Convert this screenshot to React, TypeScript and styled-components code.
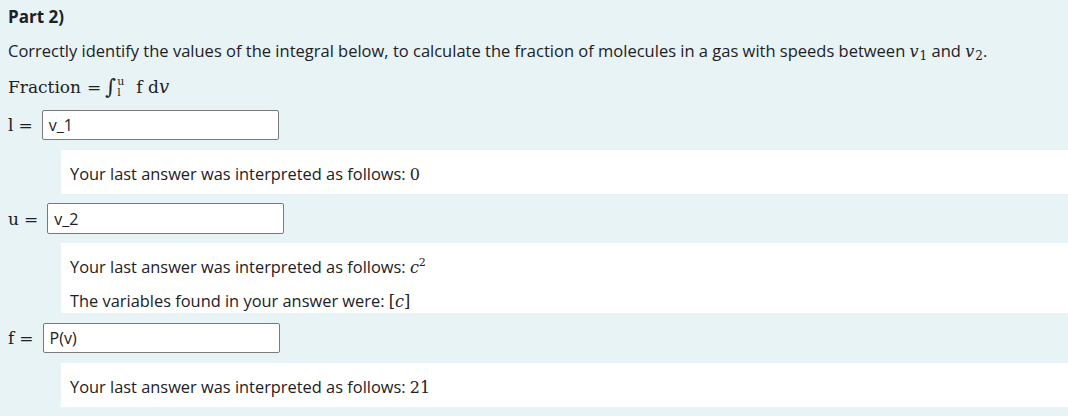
import React from "react";
import styled, { createGlobalStyle } from "styled-components";

const GlobalStyle = createGlobalStyle`
  html, body {
    margin: 0;
    padding: 0;
    background: #e7f3f5;
  }
  body {
    font-family: "Open Sans", "Noto Sans", sans-serif;
    color: #1d2125;
  }
`;

const mathFont = `"DejaVu Serif", "Liberation Serif", serif`;

const Page = styled.div`
  width: 1068px;
  height: 416px;
  overflow: hidden;
  background: #e7f3f5;
  padding-left: 8px;
  box-sizing: border-box;
`;

const Heading = styled.div`
  height: 36px;
  line-height: 33px;
  font-size: 17px;
  font-weight: 700;
`;

const Para = styled.div`
  height: 30px;
  line-height: 30px;
  font-size: 16.5px;
  white-space: nowrap;
`;

const MathLine = styled.div`
  margin-top: 4px;
  height: 34px;
  line-height: 34px;
  font-family: ${mathFont};
  font-size: 17px;
  display: flex;
  align-items: center;
`;

const M = styled.span`
  font-family: ${mathFont};
  font-size: 16px;
`;

const I = styled.span<{ $size?: number }>`
  font-family: ${mathFont};
  font-style: italic;
  font-size: ${(p) => p.$size ?? 16}px;
`;

const Sub = styled.sub`
  font-size: 12px;
  font-style: normal;
  vertical-align: -3px;
  line-height: 0;
  margin-left: 1px;
`;

const Sup = styled.sup`
  font-size: 11px;
  font-style: normal;
  vertical-align: 7px;
  line-height: 0;
`;

const Eq = styled.span`
  margin: 0 4px 0 6px;
`;

const Integral = styled.span`
  display: inline-flex;
  align-items: center;
  margin-right: 12px;
`;

const IntSign = styled.span`
  font-size: 21px;
  font-style: italic;
  line-height: 21px;
`;

const Limits = styled.span`
  display: inline-flex;
  flex-direction: column;
  font-size: 11px;
  line-height: 11px;
  margin-left: 1px;
`;

const Row = styled.div<{ $top: number; $h: number }>`
  margin-top: ${(p) => p.$top}px;
  height: ${(p) => p.$h}px;
  display: flex;
  align-items: center;
`;

const Label = styled.span`
  font-family: ${mathFont};
  font-size: 17px;
  display: inline-flex;
  gap: 5px;
  margin-right: 9px;
`;

const Field = styled.div<{ $h: number }>`
  width: 237px;
  height: ${(p) => p.$h}px;
  box-sizing: border-box;
  border: 1px solid #7a7a7a;
  border-radius: 2px;
  background: #fff;
  padding-left: 6px;
  display: flex;
  align-items: center;
  font-size: 16px;
`;

const Feedback = styled.div<{ $top: number; $h: number }>`
  margin-top: ${(p) => p.$top}px;
  margin-left: 53px;
  height: ${(p) => p.$h}px;
  background: #fff;
  padding: 7px 0 0 9px;
  box-sizing: border-box;
  font-size: 16.4px;
`;

const FeedLine = styled.div`
  height: 34px;
  line-height: 34px;
  white-space: nowrap;
`;

export default function App() {
  return (
    <>
      <GlobalStyle />
      <Page>
        <Heading>Part 2)</Heading>
        <Para>
          Correctly identify the values of the integral below, to calculate the fraction of
          molecules in a gas with speeds between <I>v<Sub>1</Sub></I> and <I>v<Sub>2</Sub></I>.
        </Para>
        <MathLine>
          Fraction
          <Eq>=</Eq>
          <Integral>
            <IntSign>∫</IntSign>
            <Limits>
              <span>u</span>
              <span>l</span>
            </Limits>
          </Integral>
          f&nbsp;d<I $size={18}>v</I>
        </MathLine>

        <Row $top={6} $h={30}>
          <Label>
            <span>l</span>
            <span>=</span>
          </Label>
          <Field $h={30}>v_1</Field>
        </Row>
        <Feedback $top={10} $h={44}>
          <FeedLine>
            Your last answer was interpreted as follows: <M>0</M>
          </FeedLine>
        </Feedback>

        <Row $top={9} $h={31}>
          <Label>
            <span>u</span>
            <span>=</span>
          </Label>
          <Field $h={31}>v_2</Field>
        </Row>
        <Feedback $top={9} $h={70}>
          <FeedLine>
            Your last answer was interpreted as follows:{" "}
            <I>
              c<Sup>2</Sup>
            </I>
          </FeedLine>
          <FeedLine>
            The variables found in your answer were: <M>[</M>
            <I>c</I>
            <M>]</M>
          </FeedLine>
        </Feedback>

        <Row $top={10} $h={30}>
          <Label>
            <span>f</span>
            <span>=</span>
          </Label>
          <Field $h={30}>P(v)</Field>
        </Row>
        <Feedback $top={10} $h={44}>
          <FeedLine>
            Your last answer was interpreted as follows: <M>21</M>
          </FeedLine>
        </Feedback>
      </Page>
    </>
  );
}
